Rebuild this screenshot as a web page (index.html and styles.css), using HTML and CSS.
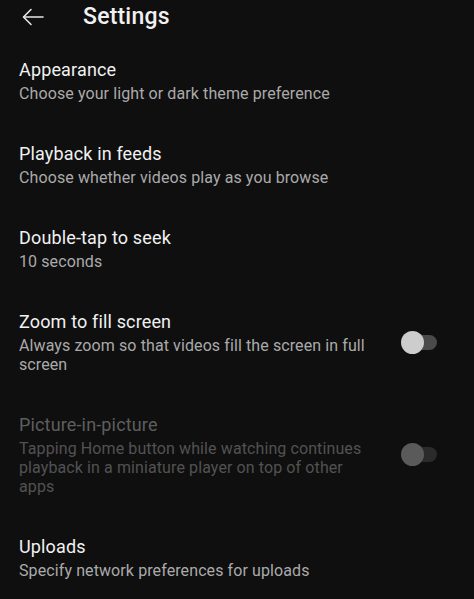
FILE: index.html
```html
<!DOCTYPE html>
<html lang="en">
<head>
<meta charset="utf-8">
<title>Settings</title>
<link rel="stylesheet" href="styles.css">
</head>
<body>
<div class="screen">
  <header class="topbar">
    <span class="back" aria-label="Back">
      <svg width="22" height="18" viewBox="0 0 22 18" fill="none" stroke="#e6e6e6" stroke-width="1.6" stroke-linecap="round" stroke-linejoin="round">
        <path d="M21 9H2"/>
        <path d="M9 1.5L1.5 9L9 16.5"/>
      </svg>
    </span>
    <h1 class="title">Settings</h1>
  </header>

  <div class="item">
    <div class="text">
      <div class="label">Appearance</div>
      <div class="desc">Choose your light or dark theme preference</div>
    </div>
  </div>

  <div class="item">
    <div class="text">
      <div class="label">Playback in feeds</div>
      <div class="desc">Choose whether videos play as you browse</div>
    </div>
  </div>

  <div class="item">
    <div class="text">
      <div class="label">Double-tap to seek</div>
      <div class="desc">10 seconds</div>
    </div>
  </div>

  <div class="item">
    <div class="text">
      <div class="label">Zoom to fill screen</div>
      <div class="desc">Always zoom so that videos fill the screen in full screen</div>
    </div>
    <div class="switch">
      <span class="track"></span>
      <span class="thumb"></span>
    </div>
  </div>

  <div class="item disabled">
    <div class="text">
      <div class="label">Picture-in-picture</div>
      <div class="desc">Tapping Home button while watching continues playback in a miniature player on top of other apps</div>
    </div>
    <div class="switch">
      <span class="track"></span>
      <span class="thumb"></span>
    </div>
  </div>

  <div class="item">
    <div class="text">
      <div class="label">Uploads</div>
      <div class="desc">Specify network preferences for uploads</div>
    </div>
  </div>
</div>
</body>
</html>
```

FILE: styles.css
```css
html, body {
  margin: 0;
  padding: 0;
  background: #0f0f0f;
}

body {
  font-family: Roboto, "Noto Sans", "Liberation Sans", sans-serif;
  color: #f1f1f1;
  overflow: hidden;
}

.screen {
  width: 474px;
  height: 599px;
  overflow: hidden;
}

.topbar {
  display: flex;
  align-items: center;
  height: 34px;
  margin-bottom: 4px;
  padding-left: 22px;
}

.back {
  display: flex;
  width: 22px;
  height: 18px;
}

.title {
  margin: 0 0 0 39px;
  font-size: 23px;
  font-weight: 500;
  line-height: 34px;
  letter-spacing: 0.2px;
  color: #f1f1f1;
}

.item {
  display: flex;
  align-items: center;
  gap: 32px;
  padding: 20px 37px 19px 19px;
}

.text {
  flex: 1;
  min-width: 0;
}

.label {
  font-size: 18px;
  line-height: 24px;
  letter-spacing: 0.15px;
  color: #f1f1f1;
}

.desc {
  margin-top: 2px;
  font-size: 16px;
  line-height: 19px;
  letter-spacing: 0.1px;
  color: #aaaaaa;
}

.disabled .label {
  color: #5e5e5e;
}

.disabled .desc {
  color: #525252;
}

.switch {
  position: relative;
  flex: none;
  width: 36px;
  height: 23px;
}

.track {
  position: absolute;
  left: 10px;
  top: 4px;
  width: 26px;
  height: 15px;
  border-radius: 8px;
  background: #4a4a4a;
}

.thumb {
  position: absolute;
  left: 0;
  top: 0;
  width: 23px;
  height: 23px;
  border-radius: 50%;
  background: #cdcdcd;
}

.disabled .track {
  background: #2b2b2b;
}

.disabled .thumb {
  background: #5a5a5a;
}
```
